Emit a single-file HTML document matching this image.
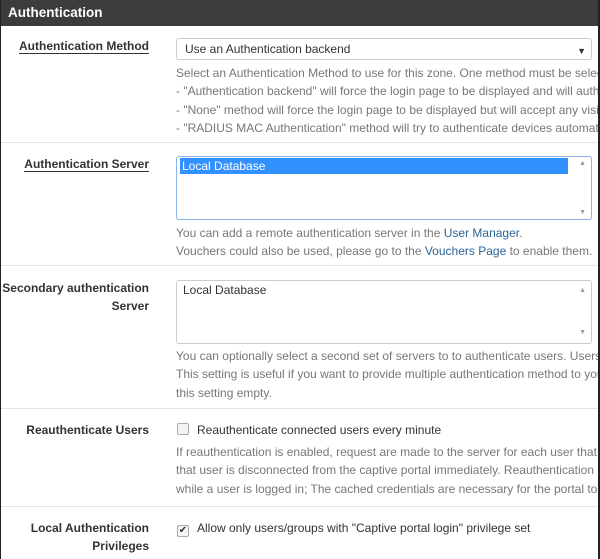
<!DOCTYPE html><html><head><style>
body{margin:0;width:600px;height:559px;overflow:hidden;background:#fff;font-family:"Liberation Sans",sans-serif;font-size:12px;color:#333;position:relative}
.frame{position:absolute;left:0;top:0;height:559px;border-left:1px solid #222;border-right:2px solid #222;box-sizing:border-box;width:600px}
.hdr{position:absolute;left:0;top:0;width:600px;height:26px;background:#3c3c3c;color:#fff;font-weight:bold;font-size:13.5px;line-height:25px;padding-left:8px;box-sizing:border-box}
.a{position:absolute;white-space:nowrap}
.lbl{position:absolute;right:451px;font-weight:bold;text-align:right;white-space:nowrap;line-height:18px}
.u{border-bottom:1px solid #333}
.help{position:absolute;left:176px;color:#777;white-space:nowrap;line-height:18.3px;width:422px;overflow:hidden}
.sep{position:absolute;left:1px;width:597px;height:1px;background:#e4e4e4}
.box{position:absolute;left:176px;width:416px;border:1px solid #ccc;border-radius:3px;box-sizing:border-box}
a{color:#2a6496;text-decoration:none}
.arr{position:absolute;right:5px;font-size:7px;color:#999}
.cb{display:inline-block;width:10px;height:10px;border:1px solid #aaa;border-radius:2px;vertical-align:-1px;margin-right:8px;background:#f4f4f4;font-size:10px;line-height:10px;text-align:center;color:#333}
</style></head><body>
<div class="hdr">Authentication</div>
<div class="lbl" style="top:37px"><span class="u">Authentication Method</span></div>
<div class="box" style="top:38px;height:22px;padding:3px 8px;line-height:14px">Use an Authentication backend<span class="arr" style="top:5px;font-size:9px;color:#333">▼</span></div>
<div class="help" style="top:64px">Select an Authentication Method to use for this zone. One method must be selected.<br>- "Authentication backend" will force the login page to be displayed and will authenticate<br>- "None" method will force the login page to be displayed but will accept any visitor<br>- "RADIUS MAC Authentication" method will try to authenticate devices automatically</div>
<div class="sep" style="top:142px"></div>
<div class="lbl" style="top:155px"><span class="u">Authentication Server</span></div>
<div class="box" style="top:156px;height:64px;border-color:#8ab4e6"><div style="margin:1px 23px 0 3px;background:#3390ff;color:#fff;height:16px;line-height:16px;padding-left:2px">Local Database</div><span class="arr" style="top:3px">▲</span><span class="arr" style="bottom:3px">▼</span></div>
<div class="help" style="top:224px">You can add a remote authentication server in the <a>User Manager</a>.<br>Vouchers could also be used, please go to the <a>Vouchers Page</a> to enable them.</div>
<div class="sep" style="top:265px"></div>
<div class="lbl" style="top:279px">Secondary authentication<br>Server</div>
<div class="box" style="top:280px;height:64px;padding:2px 6px;line-height:14px">Local Database<span class="arr" style="top:3px">▲</span><span class="arr" style="bottom:3px">▼</span></div>
<div class="help" style="top:347px">You can optionally select a second set of servers to to authenticate users. Users will<br>This setting is useful if you want to provide multiple authentication method to your<br>this setting empty.</div>
<div class="sep" style="top:408px"></div>
<div class="lbl" style="top:421px">Reauthenticate Users</div>
<div class="a" style="left:177px;top:421px;line-height:18px"><span class="cb"></span>Reauthenticate connected users every minute</div>
<div class="help" style="top:443px">If reauthentication is enabled, request are made to the server for each user that is<br>that user is disconnected from the captive portal immediately. Reauthentication requ<br>while a user is logged in; The cached credentials are necessary for the portal to</div>
<div class="sep" style="top:506px"></div>
<div class="lbl" style="top:519px">Local Authentication<br>Privileges</div>
<div class="a" style="left:177px;top:519px;line-height:18px"><span class="cb">✔</span>Allow only users/groups with "Captive portal login" privilege set</div>
<div class="frame"></div>
</body></html>
